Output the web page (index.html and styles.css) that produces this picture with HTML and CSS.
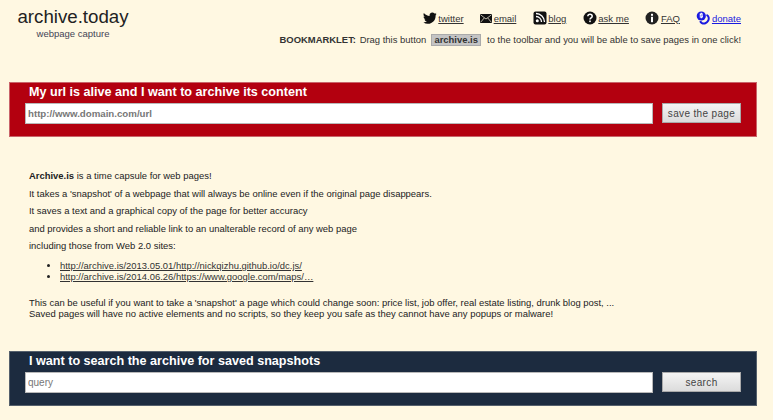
FILE: index.html
```html
<!DOCTYPE html>
<html lang="en">
<head>
<meta charset="utf-8">
<title>archive.today</title>
<link rel="stylesheet" href="styles.css">
</head>
<body>
<header class="top">
  <div class="brand">
    <div class="brand-name">archive.today</div>
    <div class="brand-sub">webpage capture</div>
  </div>
  <div class="top-right">
    <nav class="nav">
      <span class="nav-item"><svg class="ico" viewBox="0 0 16 16"><path fill="#111" d="M15.500 3.200c-.6.3-1.200.4-1.800.5.700-.4 1.100-1 1.400-1.700-.6.4-1.300.6-2 .8A3.200 3.200 0 0 0 7.600 5.700C5 5.600 2.600 4.300 1 2.400c-.8 1.500-.4 3.300 1 4.300-.5 0-1-.2-1.400-.4 0 1.600 1.100 2.900 2.500 3.200-.5.1-1 .1-1.400.1.400 1.300 1.600 2.200 3 2.200A6.500 6.500 0 0 1 .4 13.100 9.100 9.100 0 0 0 14.400 5c.4-.5.800-1.100 1.100-1.800z"/></svg><a href="#" class="nav-link">twitter</a></span>
      <span class="nav-item"><svg class="ico ico-mail" viewBox="0 0 12 9"><rect width="12" height="9" rx=".6" fill="#111"/><path d="M.6.800 6 5l5.400-4.200M.6 8.300l3.700-4.400M11.400 8.300 7.700 3.900" fill="none" stroke="#fff8e2" stroke-width=".7"/></svg><a href="#" class="nav-link">email</a></span>
      <span class="nav-item"><svg class="ico" viewBox="0 0 14 14"><rect x=".5" y=".5" width="13" height="13" rx="2" fill="#111"/><path d="M3 2.500c4.500 0 8.500 4 8.500 8.500M3 5.500c3 0 5.500 2.500 5.500 5.500" fill="none" stroke="#fff" stroke-width="1.300"/><circle cx="4.300" cy="9.800" r="1.500" fill="#fff"/></svg><a href="#" class="nav-link">blog</a></span>
      <span class="nav-item"><svg class="ico" viewBox="0 0 14 14"><circle cx="7" cy="7" r="6.500" fill="#111"/><path d="M4.800 5.300C4.900 4 5.800 3.300 7 3.300c1.300 0 2.200.8 2.200 1.900 0 1.700-2.200 1.600-2.200 3.300" fill="none" stroke="#fff" stroke-width="1.500"/><rect x="6.200" y="9.500" width="1.600" height="1.600" fill="#fff"/></svg><a href="#" class="nav-link">ask me</a></span>
      <span class="nav-item"><svg class="ico" viewBox="0 0 14 14"><circle cx="7" cy="7" r="6.500" fill="#222"/><rect x="6" y="2.800" width="2" height="2" fill="#fff"/><rect x="6" y="5.800" width="2" height="5.400" fill="#fff"/></svg><a href="#" class="nav-link">FAQ</a></span>
      <span class="nav-item"><svg class="ico" viewBox="0 0 14 14"><path fill="none" stroke="#1a1ae0" stroke-width="2" d="M10.500 3.800c2.300 1 2.800 3.800 1.600 6-1.300 2.400-4.100 3.500-6.200 2.300-.9-.5-1.400-1.200-1.700-2"/><circle cx="5.300" cy="5" r="4.600" fill="#1a1ae0"/><path fill="#fff" d="M4.700 1.800h1.200v.8h1v1.100H5v.6h1.900v2.100h-1v.8H4.700v-.8h-1V5.300h2v-.6h-2V2.600h1z"/></svg><a href="#" class="nav-link nav-link-donate">donate</a></span>
    </nav>
    <p class="bookmarklet"><strong class="bm-label">BOOKMARKLET:</strong> Drag this button <a href="#" class="bm-button">archive.is</a> to the toolbar and you will be able to save pages in one click!</p>
  </div>
</header>

<section class="band band-red">
  <h2 class="band-title">My url is alive and I want to archive its content</h2>
  <form class="band-form">
    <input class="band-input band-input-red" type="text" placeholder="http://www.domain.com/url">
    <button class="band-btn band-btn-red" type="button">save the page</button>
  </form>
</section>

<main class="intro">
  <p class="intro-line"><strong>Archive.is</strong> is a time capsule for web pages!</p>
  <p class="intro-line">It takes a 'snapshot' of a webpage that will always be online even if the original page disappears.</p>
  <p class="intro-line">It saves a text and a graphical copy of the page for better accuracy</p>
  <p class="intro-line">and provides a short and reliable link to an unalterable record of any web page</p>
  <p class="intro-line">including those from Web 2.0 sites:</p>
  <ul class="examples">
    <li><a href="#">http://archive.is/2013.05.01/http://nickqizhu.github.io/dc.js/</a></li>
    <li><a href="#">http://archive.is/2014.06.26/https://www.google.com/maps/…</a></li>
  </ul>
  <p class="closing">This can be useful if you want to take a 'snapshot' a page which could change soon: price list, job offer, real estate listing, drunk blog post, ...<br>Saved pages will have no active elements and no scripts, so they keep you safe as they cannot have any popups or malware!</p>
</main>

<section class="band band-navy">
  <h2 class="band-title">I want to search the archive for saved snapshots</h2>
  <form class="band-form">
    <input class="band-input" type="text" placeholder="query">
    <button class="band-btn" type="button">search</button>
  </form>
</section>
</body>
</html>
```
FILE: styles.css
```css
* { box-sizing: border-box; }
html, body { height: 100%; }
body {
  margin: 0;
  overflow: hidden;
  background: #fff8e2;
  color: #222;
  font-family: "Liberation Sans", Arial, sans-serif;
  font-size: 9.45px;
}
a { color: #333; }
.top {
  display: flex;
  justify-content: space-between;
  height: 82px;
  padding: 7px 32px 0 17px;
}
.brand { width: 112px; text-align: center; }
.brand-name { font-size: 18.7px; line-height: 20px; color: #222; white-space: nowrap; }
.brand-sub { font-size: 9.5px; line-height: 10px; margin-top: 2px; color: #445; }
.top-right { display: flex; flex-direction: column; align-items: flex-end; }
.nav { display: flex; gap: 16.5px; height: 18px; align-items: center; margin-top: 2px; }
.nav-item { display: inline-flex; align-items: center; gap: 1.5px; }
.nav-link { font-size: 9.5px; color: #333; }
.nav-link-donate { color: #1a1ae0; }
.ico { width: 14px; height: 14px; flex: none; }
.ico-mail { width: 12px; height: 9px; }
.bookmarklet { margin: 6px 0 0; font-size: 9.45px; line-height: 14px; white-space: nowrap; color: #333; }
.bm-label { font-weight: bold; margin-right: 1px; }
.bm-button {
  display: inline-block;
  margin: 0 3px 0 2px;
  padding: 0 2.5px;
  background: #c4c4c4;
  border: 1px solid #aaa;
  font-weight: bold;
  color: #333;
  text-decoration: none;
  line-height: 10px;
}
.band {
  margin: 0 16px 0 9px;
  height: 55px;
  padding: 1px 15px 0;
}
.band-red { background: #b3000f; border: 1px solid #c9646a; }
.band-navy { background: #1c2b3f; border: 1px solid #55606c; }
.band-title {
  margin: 0 0 2px 4px;
  font-size: 12.6px;
  line-height: 17px;
  font-weight: bold;
  color: #fff;
}
.band-form { display: flex; gap: 9px; }
.band-input {
  flex: 1;
  height: 21px;
  padding: 0 2px;
  border: 1px solid #b9b9b9;
  background: #fff;
  font-family: inherit;
  font-size: 10px;
  outline: none;
}
.band-input-red { font-weight: bold; font-size: 9.7px; }
.band-input::placeholder { color: #777; opacity: 1; }
.band-btn {
  width: 79px;
  height: 20px;
  padding: 0;
  border: 1px solid #aaa;
  background: linear-gradient(#f4f4f4, #dcdcdc);
  font-family: "Liberation Sans", Arial, sans-serif;
  font-size: 10px;
  letter-spacing: .35px;
  color: #444;
}
.intro { height: 214px; padding: 0 0 0 29px; }
.intro-line { margin: 0; padding-top: 33px; line-height: 11px; }
.intro-line + .intro-line { padding-top: 6.6px; }
.examples { margin: 8.6px 0 0; padding: 0 0 0 31px; line-height: 11px; }
.closing { margin: 15px 0 0; line-height: 11px; }
```
